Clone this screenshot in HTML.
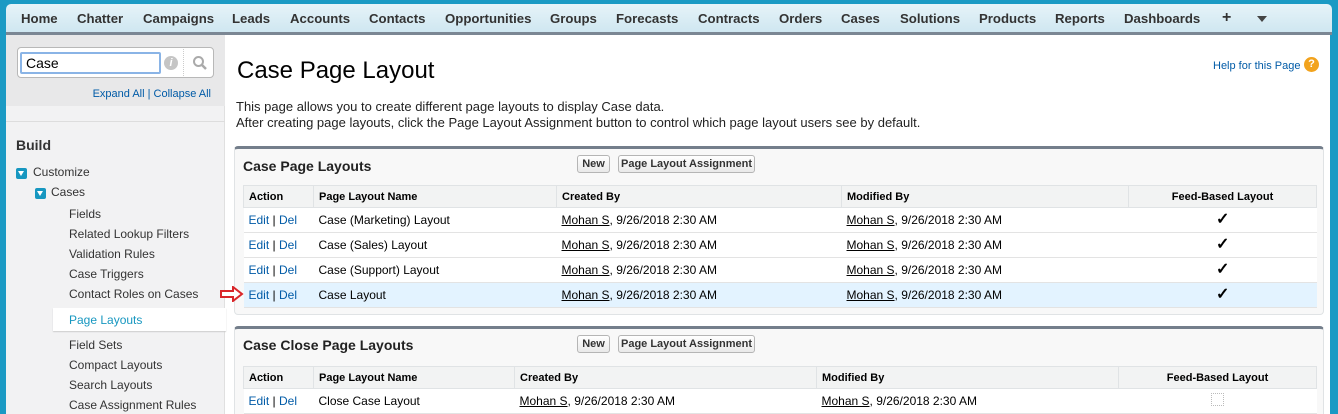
<!DOCTYPE html>
<html style="overflow:hidden"><head><style>
*{margin:0;padding:0;box-sizing:border-box}
html,body{width:1338px;height:414px;overflow:hidden}
body{background:#1b9ac4;font-family:"Liberation Sans",Arial,sans-serif;position:relative;color:#222}
.a{position:absolute;white-space:nowrap}
#tabs{position:absolute;left:6px;top:4px;width:1326px;height:31px;background:linear-gradient(#e6f3f8,#cfe7f1);border-bottom:3px solid #7b8794;border-radius:5px 5px 0 0}
.t{position:absolute;top:7px;font-size:13.2px;font-weight:bold;color:#333}
#main{position:absolute;left:6px;top:35px;width:1324px;height:379px;background:#fff}
#side{position:absolute;left:6px;top:35px;width:219px;height:379px;background:#f2f2f3;border-right:1px solid #e0e0e0}
#sidetop{position:absolute;left:0;top:0;width:219px;height:71px;background:#e8e8e9}
.si{position:absolute;left:63px;font-size:12px;color:#333}
.panel{position:absolute;left:234px;width:1090px;background:#f8f8f8;border:1px solid #e0e3e5;border-top:3px solid #747e8b;border-radius:4px;overflow:hidden}
.ptitle{position:absolute;left:8px;font-size:14px;font-weight:bold;color:#222}
.btn{position:absolute;height:18px;border:1px solid #b5b5b5;border-radius:3px;background:linear-gradient(#fff,#e9e9e9);font-size:11px;font-weight:bold;color:#333;text-align:center;line-height:16px}
table{position:absolute;left:8px;border-collapse:collapse;width:1074px;font-size:12px}
th{background:#f2f3f3;text-align:left;font-size:11px;font-weight:bold;color:#000;padding:0 5px;border:1px solid #e0e3e5;height:22px}
td{background:#fff;border-bottom:1px solid #e3e3e3;padding:0 5px;height:25px;color:#000}
tr.hl td{background:#e3f3ff}
td.ac a{color:#015ba7}
u{text-decoration:underline}
.chk{display:inline-block;width:13px;height:13px;font-size:16px;line-height:13px;text-align:center;font-weight:bold}
.chk.e{border:1px dotted #bbb}
.ic{display:inline-block;width:11px;height:11px;background:#1797c0;border-radius:2px;position:absolute}
.ic:after{content:"";position:absolute;left:2px;top:3px;border-left:3.5px solid transparent;border-right:3.5px solid transparent;border-top:5px solid #fff}
</style></head><body>
<div id="tabs">
<span class="t" style="left:15px">Home</span>
<span class="t" style="left:71px">Chatter</span>
<span class="t" style="left:137px">Campaigns</span>
<span class="t" style="left:226px">Leads</span>
<span class="t" style="left:284px">Accounts</span>
<span class="t" style="left:363px">Contacts</span>
<span class="t" style="left:439px">Opportunities</span>
<span class="t" style="left:544px">Groups</span>
<span class="t" style="left:610px">Forecasts</span>
<span class="t" style="left:692px">Contracts</span>
<span class="t" style="left:773px">Orders</span>
<span class="t" style="left:835px">Cases</span>
<span class="t" style="left:894px">Solutions</span>
<span class="t" style="left:973px">Products</span>
<span class="t" style="left:1049px">Reports</span>
<span class="t" style="left:1118px">Dashboards</span>
<span class="t" style="left:1216px;font-size:16px;top:5px">+</span>
<span class="a" style="left:1251px;top:12px;border-left:5px solid transparent;border-right:5px solid transparent;border-top:6px solid #444"></span>
</div>
<div id="main"></div>
<div id="side">
<div id="sidetop"></div>
<div class="a" style="left:11px;top:12px;width:197px;height:31px;background:#fff;border:1px solid #b8b8b8;border-radius:4px"></div>
<div class="a" style="left:14px;top:17px;width:141px;height:22px;border:2px solid #8ab4e6;border-radius:2px;font-size:14px;padding:1px 4px;color:#000">Case</div>
<div class="a" style="left:158px;top:21px;width:14px;height:14px;border-radius:50%;background:#c5c5c5;color:#fff;font-size:11px;font-style:italic;font-weight:bold;text-align:center;line-height:14px">i</div>
<div class="a" style="left:177px;top:14px;height:27px;border-left:1px dotted #ccc"></div>
<svg class="a" style="left:186px;top:20px" width="16" height="16" viewBox="0 0 16 16"><circle cx="6.5" cy="6.5" r="4.5" fill="none" stroke="#aaa" stroke-width="2"/><path d="M10 10l4 4" stroke="#aaa" stroke-width="2.5"/></svg>
<div class="a" style="right:13px;top:53px;font-size:11px;color:#015ba7">Expand All | Collapse All</div>
<div class="a" style="left:0;top:86px;width:219px;height:1px;background:#ddd"></div>
<div class="a" style="left:10px;top:102px;font-size:14px;font-weight:bold;color:#333">Build</div>
<span class="ic" style="left:10px;top:133px"></span>
<div class="a" style="left:27px;top:130px;font-size:12px;color:#333">Customize</div>
<span class="ic" style="left:29px;top:153px"></span>
<div class="a" style="left:45px;top:150px;font-size:12px;color:#333">Cases</div>
<div class="si" style="top:172px">Fields</div>
<div class="si" style="top:192px">Related Lookup Filters</div>
<div class="si" style="top:212px">Validation Rules</div>
<div class="si" style="top:232px">Case Triggers</div>
<div class="si" style="top:252px">Contact Roles on Cases</div>
<div class="a" style="left:47px;top:273px;width:173px;height:23px;background:#fff;box-shadow:0 1px 1px #ccc"></div>
<div class="si" style="top:278px;color:#1797c0">Page Layouts</div>
<div class="si" style="top:303px">Field Sets</div>
<div class="si" style="top:323px">Compact Layouts</div>
<div class="si" style="top:343px">Search Layouts</div>
<div class="si" style="top:363px">Case Assignment Rules</div>
</div>

<div class="a" style="left:237px;top:57px;font-size:24px;color:#000">Case Page Layout</div>
<div class="a" style="left:1213px;top:60px;font-size:11px;color:#015ba7">Help for this Page</div>
<div class="a" style="left:1304px;top:57px;width:15px;height:15px;border-radius:50%;background:#f2a31d;color:#fff;font-size:11px;font-weight:bold;text-align:center;line-height:15px">?</div>
<div class="a" style="left:236px;top:99px;font-size:13px;line-height:16px;color:#222">This page allows you to create different page layouts to display Case data.<br>After creating page layouts, click the Page Layout Assignment button to control which page layout users see by default.</div>

<div class="panel" style="top:146px;height:169px">
<div class="ptitle" style="top:9px">Case Page Layouts</div>
<div class="btn" style="left:342px;top:6px;width:33px">New</div>
<div class="btn" style="left:383px;top:6px;width:137px">Page Layout Assignment</div>
<table style="top:36px">
<tr><th style="width:70px">Action</th><th style="width:243px">Page Layout Name</th><th style="width:285px">Created By</th><th style="width:287px">Modified By</th><th style="text-align:center">Feed-Based Layout</th></tr>
<tr><td class="ac"><a>Edit</a> | <a>Del</a></td><td>Case (Marketing) Layout</td><td><u>Mohan S</u>, 9/26/2018 2:30 AM</td><td><u>Mohan S</u>, 9/26/2018 2:30 AM</td><td style="text-align:center"><span class="chk">✓</span></td></tr>
<tr><td class="ac"><a>Edit</a> | <a>Del</a></td><td>Case (Sales) Layout</td><td><u>Mohan S</u>, 9/26/2018 2:30 AM</td><td><u>Mohan S</u>, 9/26/2018 2:30 AM</td><td style="text-align:center"><span class="chk">✓</span></td></tr>
<tr><td class="ac"><a>Edit</a> | <a>Del</a></td><td>Case (Support) Layout</td><td><u>Mohan S</u>, 9/26/2018 2:30 AM</td><td><u>Mohan S</u>, 9/26/2018 2:30 AM</td><td style="text-align:center"><span class="chk">✓</span></td></tr>
<tr class="hl"><td class="ac"><a>Edit</a> | <a>Del</a></td><td>Case Layout</td><td><u>Mohan S</u>, 9/26/2018 2:30 AM</td><td><u>Mohan S</u>, 9/26/2018 2:30 AM</td><td style="text-align:center"><span class="chk">✓</span></td></tr>
</table>
</div>

<svg class="a" style="left:220px;top:286px" width="24" height="16" viewBox="0 0 24 16"><path d="M1 5h12V1l9 7-9 7v-4H1z" fill="#fff" stroke="#d9262a" stroke-width="2"/></svg>

<div class="panel" style="top:326px;height:95px">
<div class="ptitle" style="top:8px">Case Close Page Layouts</div>
<div class="btn" style="left:342px;top:6px;width:33px">New</div>
<div class="btn" style="left:383px;top:6px;width:137px">Page Layout Assignment</div>
<table style="top:37px">
<tr><th style="width:70px;height:21px">Action</th><th style="width:201px">Page Layout Name</th><th style="width:302px">Created By</th><th style="width:302px">Modified By</th><th style="text-align:center">Feed-Based Layout</th></tr>
<tr><td class="ac"><a>Edit</a> | <a>Del</a></td><td>Close Case Layout</td><td><u>Mohan S</u>, 9/26/2018 2:30 AM</td><td><u>Mohan S</u>, 9/26/2018 2:30 AM</td><td style="text-align:center"><span class="chk e"></span></td></tr>
</table>
</div>
</body></html>
